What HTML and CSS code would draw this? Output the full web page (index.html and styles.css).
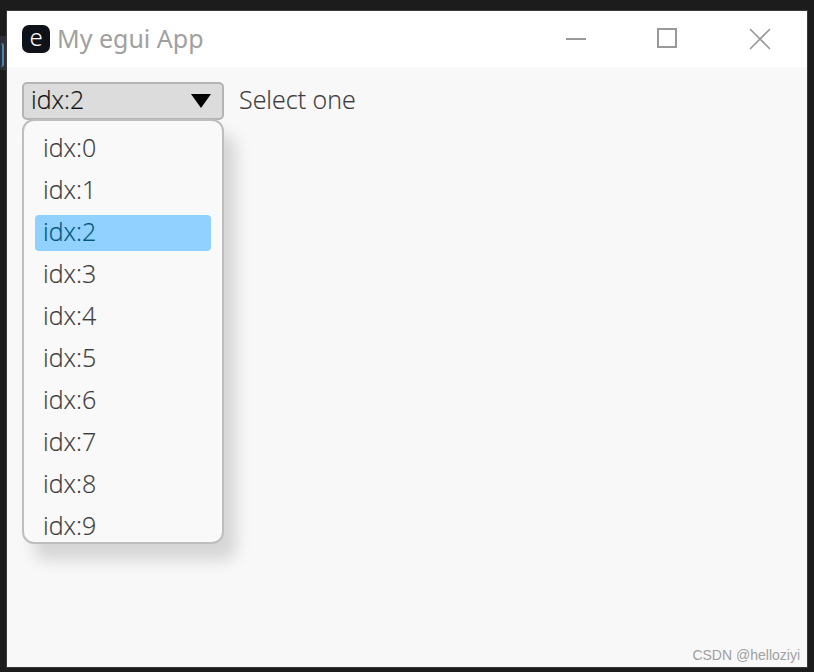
FILE: index.html
```html
<!DOCTYPE html>
<html lang="en">
<head>
  <meta charset="UTF-8" />
  <title>My egui App</title>
  <link rel="stylesheet" href="styles.css">
</head>
<body>
  <div class="edge-strip"><div class="edge-brace"></div></div>

  <div class="window">
    <div class="titlebar">
      <div class="app-icon">e</div>
      <div class="app-title">My egui App</div>
      <div class="win-controls">
        <svg class="win-btn" width="24" height="24" viewBox="0 0 24 24"><path d="M2 12H22" stroke="#999" stroke-width="2" fill="none"/></svg>
        <svg class="win-btn win-max" width="24" height="24" viewBox="0 0 24 24"><rect x="3" y="2" width="18" height="18" stroke="#999" stroke-width="2" fill="none"/></svg>
        <svg class="win-btn" width="24" height="24" viewBox="0 0 24 24"><path d="M2 2L22 22M22 2L2 22" stroke="#999" stroke-width="1.6" fill="none"/></svg>
      </div>
    </div>

    <div class="content">
      <div class="combo-row">
        <div class="combo">
          <span class="text-up">idx:2</span>
          <svg class="combo-arrow" width="20" height="14" viewBox="0 0 20 14"><path d="M0 0H20L10 14Z" fill="#000"/></svg>
        </div>
        <div class="combo-label text-up">Select one</div>
      </div>

      <div class="popup">
        <div class="popup-item"><span class="text-up">idx:0</span></div>
        <div class="popup-item"><span class="text-up">idx:1</span></div>
        <div class="popup-item selected"><span class="text-up">idx:2</span></div>
        <div class="popup-item"><span class="text-up">idx:3</span></div>
        <div class="popup-item"><span class="text-up">idx:4</span></div>
        <div class="popup-item"><span class="text-up">idx:5</span></div>
        <div class="popup-item"><span class="text-up">idx:6</span></div>
        <div class="popup-item"><span class="text-up">idx:7</span></div>
        <div class="popup-item"><span class="text-up">idx:8</span></div>
        <div class="popup-item"><span class="text-up">idx:9</span></div>
      </div>

      <div class="watermark">CSDN @helloziyi</div>
    </div>
  </div>
</body>
</html>
```

FILE: styles.css
```css
html, body {
  height: 100%;
}

body {
  margin: 0;
  background: #1c1c1c;
  font-family: 'Open Sans', 'Noto Sans', sans-serif;
  font-weight: 400;
  overflow: hidden;
  box-sizing: border-box;
  padding: 11px 7px 4px 7px;
}

.edge-strip {
  position: absolute;
  left: 0;
  top: 36px;
  width: 6px;
  height: 34px;
  background: #2c2f35;
}

.edge-brace {
  width: 4px;
  height: 24px;
  margin-top: 7px;
  box-sizing: border-box;
  border-right: 2px solid #4d86ad;
  border-radius: 0 3px 3px 0;
}

.window {
  width: 800px;
  height: 656px;
  display: flex;
  flex-direction: column;
  box-shadow: 0 0 0 1px #3a3a3a;
  background: #f8f8f8;
}

.titlebar {
  height: 56px;
  background: #fff;
  display: flex;
  align-items: center;
  padding-left: 15px;
  flex-shrink: 0;
}

.app-icon {
  width: 28px;
  height: 28px;
  border-radius: 7px;
  background: #0f1218;
  color: #fff;
  font-size: 24px;
  font-weight: 300;
  line-height: 24px;
  text-align: center;
  font-family: 'Noto Sans', sans-serif;
}

.app-title {
  margin-left: 7px;
  margin-top: -2px;
  font-size: 25px;
  font-family: 'Noto Sans', sans-serif;
  color: #a0a0a0;
}

.win-controls {
  margin-left: auto;
  display: flex;
  gap: 68px;
  padding-right: 35px;
}

.win-btn {
  display: block;
}

.win-max {
  margin-left: -1px;
  margin-right: 1px;
}

.content {
  flex: 1;
  position: relative;
  padding: 15px;
}

.combo-row {
  display: flex;
  align-items: center;
  gap: 15px;
}

.text-up {
  margin-top: -4px;
  -webkit-text-stroke: 0.2px currentColor;
}

.combo {
  width: 202px;
  height: 38px;
  box-sizing: border-box;
  background: #dcdcdc;
  border: 2px solid #b4b4b4;
  border-radius: 5px;
  display: flex;
  align-items: center;
  justify-content: space-between;
  padding: 0 11px 0 7px;
  color: #111;
  font-size: 25px;
  font-weight: 300;
}

.combo-label {
  font-size: 25px;
  font-weight: 300;
  color: #3c3c3c;
}

.popup {
  position: absolute;
  left: 15px;
  top: 52px;
  width: 202px;
  height: 425px;
  box-sizing: border-box;
  background: #f9f9f9;
  border: 2px solid #bebebe;
  border-radius: 12px;
  padding: 10px 11px 0 11px;
  overflow: hidden;
  box-shadow: 12px 16px 16px rgba(0, 0, 0, 0.14);
  display: flex;
  flex-direction: column;
  gap: 6px;
}

.popup-item {
  height: 36px;
  flex-shrink: 0;
  display: flex;
  align-items: center;
  padding-left: 8px;
  border-radius: 4px;
  font-size: 25px;
  font-weight: 300;
  color: #3c3c3c;
}

.popup-item.selected {
  background: #90d1ff;
  color: #005578;
}

.watermark {
  position: absolute;
  right: 7px;
  bottom: 4px;
  font-family: 'Liberation Sans', sans-serif;
  font-size: 14px;
  color: #a0a0a0;
}
```
